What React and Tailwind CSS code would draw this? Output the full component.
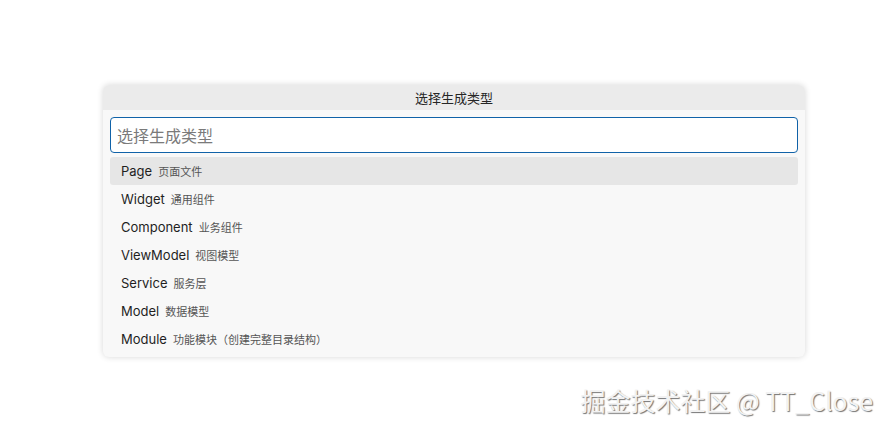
import React from "react";

const items = [
  { name: "Page", desc: "页面文件" },
  { name: "Widget", desc: "通用组件" },
  { name: "Component", desc: "业务组件" },
  { name: "ViewModel", desc: "视图模型" },
  { name: "Service", desc: "服务层" },
  { name: "Model", desc: "数据模型" },
  { name: "Module", desc: "功能模块（创建完整目录结构）" },
];

const font = "font-['Inter','Noto_Sans_CJK_SC',sans-serif]";

export default function App() {
  return (
    <div className={`relative w-[890px] h-[432px] bg-white overflow-hidden ${font}`}>
      <div className="pt-[85px] pl-[103px]">
        <div className="w-[702px] rounded-[6px] bg-[#f8f8f8] shadow-[0_0_6px_rgba(0,0,0,0.16)] overflow-hidden">
          <div className="h-[25px] pt-[2px] bg-[#ebebeb] flex items-center justify-center text-[13px] text-[#262626]">
            选择生成类型
          </div>
          <div className="px-[7px] pt-[7px] pb-[4px]">
            <input
              className="w-full h-[36px] rounded-[4px] border border-[#1062a8] bg-white px-[6px] pt-[1px] text-[16px] text-[#222] placeholder:text-[#7a7a7a] outline-none"
              placeholder="选择生成类型"
            />
            <div className="mt-[4px]">
              {items.map((it, i) => (
                <div
                  key={it.name}
                  className={`h-[28px] pt-[2px] flex items-center px-[11px] rounded-[3px] ${i === 0 ? "bg-[#e6e6e6]" : ""}`}
                >
                  <span className="text-[13px] text-[#1f1f1f]">{it.name}</span>
                  <span className="ml-[6px] text-[11px] text-[#555]">{it.desc}</span>
                </div>
              ))}
            </div>
          </div>
        </div>
      </div>
      <div className="absolute right-[17px] top-[382px] text-[25px] text-[#f2f2f2] [text-shadow:1px_1px_1px_rgba(0,0,0,0.55)] font-['Noto_Sans_CJK_SC','Open_Sans',sans-serif]">
        掘金技术社区 @ TT_Close
      </div>
    </div>
  );
}
